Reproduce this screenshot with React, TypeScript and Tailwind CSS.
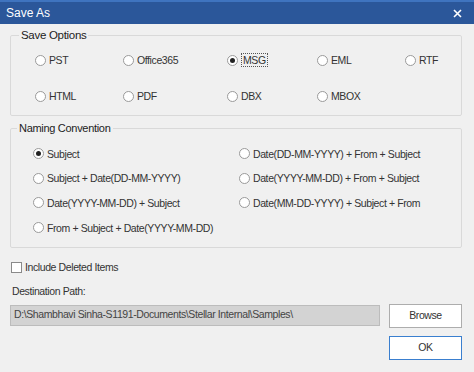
import React from "react"

const font = { fontFamily: '"Liberation Sans", Arial, sans-serif' }

function Radio({ label, checked = false, focused = false }: { label: string; checked?: boolean; focused?: boolean }) {
  return (
    <div className="flex items-center gap-[3px] text-[#333]">
      <span className="flex h-[11px] w-[11px] items-center justify-center rounded-full border border-[#9a9a9a] bg-white">
        {checked && <span className="h-[5px] w-[5px] rounded-full bg-[#222]" />}
      </span>
      <span className={focused ? "border border-dotted border-[#555] px-[1px] leading-[12px]" : "leading-[12px]"}>{label}</span>
    </div>
  )
}

export default function App() {
  return (
    <div className="flex h-[372px] w-[474px] flex-col bg-[#f0f0f0] text-[10.5px] tracking-[-0.4px]" style={font}>
      {/* title bar */}
      <div className="flex h-[24px] items-center justify-between border-t-2 border-[#3f74bf] bg-[#2b579a] pl-[6px] pr-[12px] text-white">
        <span className="text-[12px] tracking-normal">Save As</span>
        <svg width="9" height="9" viewBox="0 0 9 9" aria-hidden="true">
          <path d="M1 1 L8 8 M8 1 L1 8" stroke="white" strokeWidth="1.6" />
        </svg>
      </div>

      <div className="flex flex-col px-[10px] pr-[12px] pt-[3px]">
        <fieldset className="h-[89px] rounded-[2px] border border-[#d9d9d9] pl-[24px] pb-0">
          <legend className="ml-[-16px] px-[2px] text-[11.5px] tracking-[-0.3px] text-[#222]">Save Options</legend>
          <div className="mt-[9px] grid grid-cols-[88px_104px_90px_88px_auto] gap-y-[23px]">
            <Radio label="PST" />
            <Radio label="Office365" />
            <Radio label="MSG" checked focused />
            <Radio label="EML" />
            <Radio label="RTF" />
            <Radio label="HTML" />
            <Radio label="PDF" />
            <Radio label="DBX" />
            <Radio label="MBOX" />
          </div>
        </fieldset>

        <fieldset className="mt-[4px] h-[128px] rounded-[2px] border border-[#d9d9d9] pl-[22px]">
          <legend className="ml-[-16px] px-[2px] text-[11px] tracking-[-0.3px] text-[#222]">Naming Convention</legend>
          <div className="mt-[11px] grid grid-cols-[206px_auto] gap-y-[12.7px]">
            <Radio label="Subject" checked />
            <Radio label="Date(DD-MM-YYYY) + From + Subject" />
            <Radio label="Subject + Date(DD-MM-YYYY)" />
            <Radio label="Date(YYYY-MM-DD) + From + Subject" />
            <Radio label="Date(YYYY-MM-DD) + Subject" />
            <Radio label="Date(MM-DD-YYYY) + Subject + From" />
            <Radio label="From + Subject + Date(YYYY-MM-DD)" />
          </div>
        </fieldset>

        <label className="mt-[12px] flex items-center gap-[3px] pl-[1px] text-[#333]">
          <span className="h-[11px] w-[11px] border border-[#8a8a8a] bg-white" />
          <span>Include Deleted Items</span>
        </label>

        <div className="mt-[8px] pl-[2px] text-[#333]">Destination Path:</div>

        <div className="mt-[4px] flex items-start gap-[9px]">
          <div className="mt-[1px] flex h-[21px] flex-1 items-center border border-[#bcbcbc] bg-[#d3d3d3] px-[3px] text-[#444]">
            D:\Shambhavi Sinha-S1191-Documents\Stellar Internal\Samples\
          </div>
          <div className="flex w-[73px] flex-col gap-[8px]">
            <button className="h-[24px] border border-[#adadad] bg-white text-[#333]">Browse</button>
            <button className="h-[24px] border border-[#3a7fcf] bg-white text-[#333]">OK</button>
          </div>
        </div>
      </div>
    </div>
  )
}
